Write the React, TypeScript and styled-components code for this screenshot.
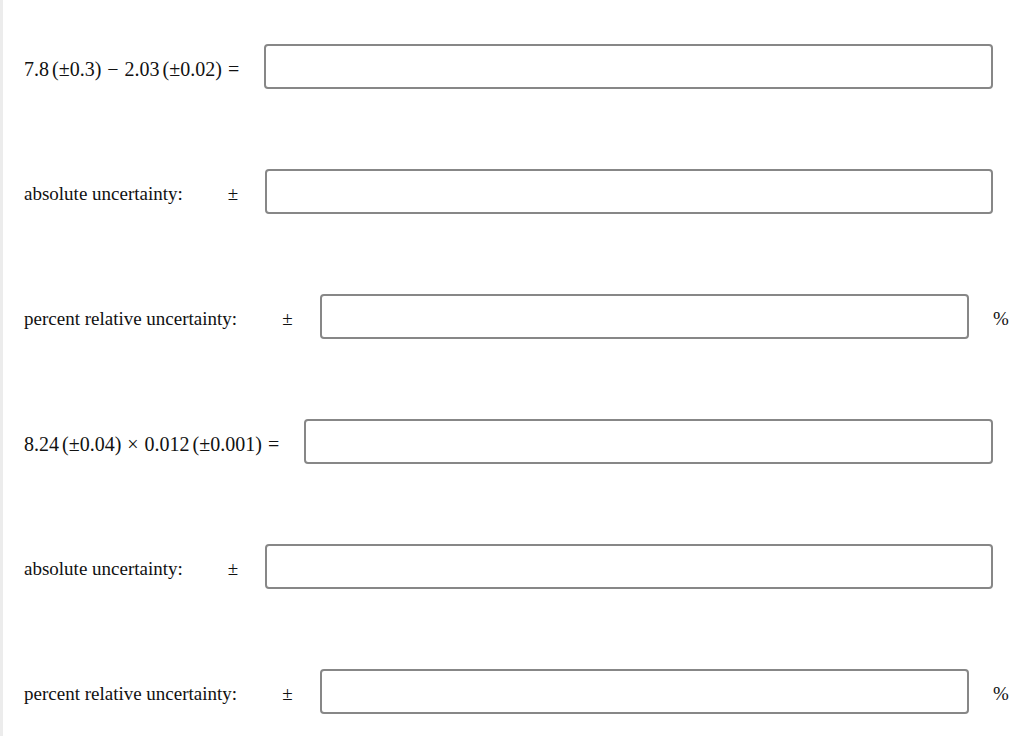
import React from "react";
import styled, { createGlobalStyle } from "styled-components";

const Global = createGlobalStyle`
  html, body { margin: 0; padding: 0; background: #fff; }
  body { font-family: "Liberation Serif", "Times New Roman", serif; color: #111; }
`;

const Page = styled.div`
  border-left: 3px solid #ececec;
  min-height: 736px;
  box-sizing: border-box;
  padding: 44px 31px 0 21px;
  display: flex;
  flex-direction: column;
  gap: 80px;
`;

const Row = styled.div`
  display: flex;
  align-items: center;
  height: 45px;
  font-size: 19px;
`;

const Label = styled.span`
  white-space: nowrap;
  padding-top: 5px;
`;

const Expr = styled.span`
  white-space: nowrap;
  padding-top: 5px;
  display: inline-flex;
  align-items: baseline;
  font-size: 20px;
`;

const Paren = styled.span`
  margin-left: 3px;
`;

const Op = styled.span`
  margin: 0 6px;
`;

const Pm = styled.span`
  margin-left: 45px;
  padding-top: 5px;
`;

const Input = styled.div<{ $gap: number }>`
  flex: 1;
  height: 45px;
  box-sizing: border-box;
  border: 2px solid #878787;
  border-radius: 4px;
  margin-left: ${(p) => p.$gap}px;
`;

const Percent = styled.span`
  margin-left: 24px;
  width: 12px;
  margin-right: -12px;
  padding-top: 5px;
`;

type Term = { v: string; u: string };
type RowDef =
  | { kind: "eq"; a: Term; op: string; b: Term }
  | { kind: "abs" }
  | { kind: "pct" };

const rows: RowDef[] = [
  { kind: "eq", a: { v: "7.8", u: "0.3" }, op: "−", b: { v: "2.03", u: "0.02" } },
  { kind: "abs" },
  { kind: "pct" },
  { kind: "eq", a: { v: "8.24", u: "0.04" }, op: "×", b: { v: "0.012", u: "0.001" } },
  { kind: "abs" },
  { kind: "pct" },
];

function TermView({ t }: { t: Term }) {
  return (
    <>
      <span>{t.v}</span>
      <Paren>(±{t.u})</Paren>
    </>
  );
}

export default function App() {
  return (
    <>
      <Global />
      <Page>
        {rows.map((r, i) => {
          if (r.kind === "eq")
            return (
              <Row key={i}>
                <Expr>
                  <TermView t={r.a} />
                  <Op>{r.op}</Op>
                  <TermView t={r.b} />
                  <Op>=</Op>
                </Expr>
                <Input $gap={19} />
              </Row>
            );
          if (r.kind === "abs")
            return (
              <Row key={i}>
                <Label>absolute uncertainty:</Label>
                <Pm>±</Pm>
                <Input $gap={27} />
              </Row>
            );
          return (
            <Row key={i}>
              <Label>percent relative uncertainty:</Label>
              <Pm>±</Pm>
              <Input $gap={27} />
              <Percent>%</Percent>
            </Row>
          );
        })}
      </Page>
    </>
  );
}
